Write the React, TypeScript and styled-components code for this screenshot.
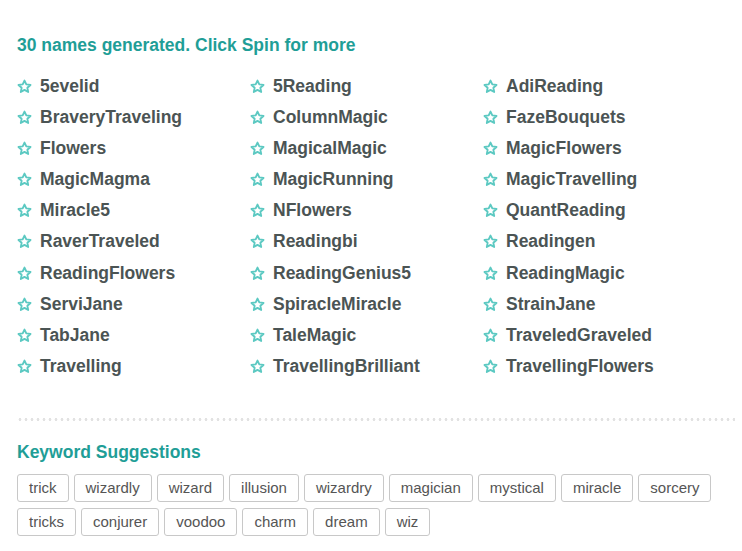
import styled, { createGlobalStyle } from 'styled-components';

const GlobalStyle = createGlobalStyle`
  body {
    margin: 0;
    background: #fff;
    font-family: "Liberation Sans", Arial, sans-serif;
  }
`;

const NAMES = [
  '5evelid', '5Reading', 'AdiReading',
  'BraveryTraveling', 'ColumnMagic', 'FazeBouquets',
  'Flowers', 'MagicalMagic', 'MagicFlowers',
  'MagicMagma', 'MagicRunning', 'MagicTravelling',
  'Miracle5', 'NFlowers', 'QuantReading',
  'RaverTraveled', 'Readingbi', 'Readingen',
  'ReadingFlowers', 'ReadingGenius5', 'ReadingMagic',
  'ServiJane', 'SpiracleMiracle', 'StrainJane',
  'TabJane', 'TaleMagic', 'TraveledGraveled',
  'Travelling', 'TravellingBrilliant', 'TravellingFlowers',
];

const KEYWORDS = [
  'trick', 'wizardly', 'wizard', 'illusion', 'wizardry', 'magician', 'mystical', 'miracle', 'sorcery',
  'tricks', 'conjurer', 'voodoo', 'charm', 'dream', 'wiz',
];

const Page = styled.div`
  padding: 35px 7px 0 17px;
`;

const Heading = styled.h3`
  margin: 0;
  font-size: 17.5px;
  font-weight: bold;
  color: #1f9e97;
  line-height: 20px;
`;

const NameGrid = styled.ul`
  list-style: none;
  margin: 20px 0 0;
  padding: 0;
  display: grid;
  grid-template-columns: repeat(3, 233px);
  grid-auto-rows: 31.2px;
`;

const NameItem = styled.li`
  display: flex;
  align-items: center;
  gap: 8px;
  font-size: 17.5px;
  font-weight: bold;
  color: #4b5454;
  height: 22px;
`;

const Divider = styled.hr`
  margin: 31px 0 0;
  border: 0;
  height: 3px;
  background-image: radial-gradient(circle, #e2e2e2 1.3px, transparent 1.6px);
  background-size: 6px 3px;
  background-repeat: repeat-x;
`;

const SubHeading = styled(Heading)`
  margin-top: 21px;
`;

const Tags = styled.div`
  display: flex;
  flex-wrap: wrap;
  gap: 6px 5px;
  margin-top: 12px;
`;

const Tag = styled.span`
  display: inline-flex;
  align-items: center;
  height: 28px;
  box-sizing: border-box;
  padding: 0 11px;
  border: 1px solid #c8c8c8;
  border-radius: 3px;
  font-size: 15px;
  color: #555;
  background: #fff;
`;

const Star = () => (
  <svg width="15" height="15" viewBox="0 0 24 24" fill="none" stroke="#5cc9c2" strokeWidth="3" strokeLinejoin="round">
    <path d="M12 2.5l2.9 6.2 6.7.8-5 4.6 1.3 6.7L12 17.5l-5.9 3.3 1.3-6.7-5-4.6 6.7-.8z" />
  </svg>
);

export default function App() {
  return (
    <Page>
      <GlobalStyle />
      <Heading>30 names generated. Click Spin for more</Heading>
      <NameGrid>
        {NAMES.map((n) => (
          <NameItem key={n}>
            <Star />
            {n}
          </NameItem>
        ))}
      </NameGrid>
      <Divider />
      <SubHeading>Keyword Suggestions</SubHeading>
      <Tags>
        {KEYWORDS.map((k) => (
          <Tag key={k}>{k}</Tag>
        ))}
      </Tags>
    </Page>
  );
}
